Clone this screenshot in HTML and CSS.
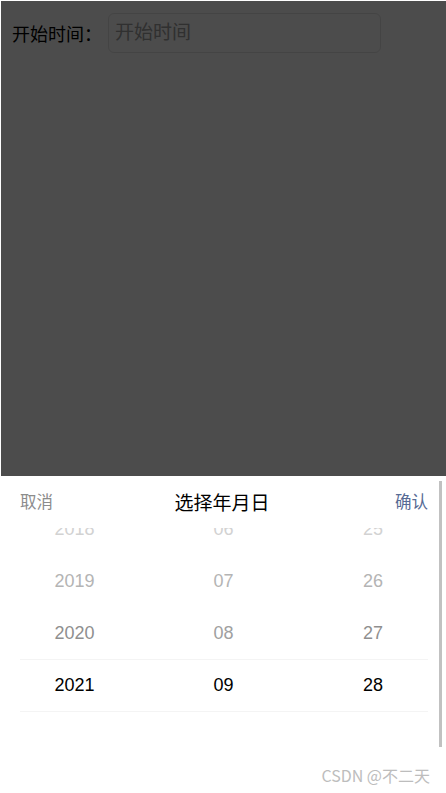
FILE: index.html
```html
<!DOCTYPE html>
<html lang="zh">
<head>
<meta charset="utf-8">
<title>选择年月日</title>
<link rel="stylesheet" href="styles.css">
</head>
<body>
<div class="form-row">
  <label class="form-label">开始时间：</label>
  <input class="form-input" type="text" placeholder="开始时间">
</div>

<div class="mask"></div>

<div class="popup">
  <div class="popup-header">
    <span class="btn-cancel">取消</span>
    <span class="popup-title">选择年月日</span>
    <span class="btn-confirm">确认</span>
  </div>
  <div class="picker">
    <div class="picker-cols">
      <div class="col">
        <div class="item far">2018</div>
        <div class="item mid">2019</div>
        <div class="item near">2020</div>
        <div class="item sel">2021</div>
      </div>
      <div class="col">
        <div class="item far">06</div>
        <div class="item mid">07</div>
        <div class="item near2">08</div>
        <div class="item sel">09</div>
      </div>
      <div class="col">
        <div class="item far">25</div>
        <div class="item mid">26</div>
        <div class="item near">27</div>
        <div class="item sel">28</div>
      </div>
    </div>
    <div class="indicator"></div>
  </div>
  <div class="scrollbar"></div>
  <div class="watermark">CSDN @不二天</div>
</div>
</body>
</html>
```

FILE: styles.css
```css
html, body {
  margin: 0;
  padding: 0;
  background: #ffffff;
}
body {
  width: 446px;
  height: 793px;
  overflow: hidden;
  position: relative;
  font-family: "Liberation Sans", "Noto Sans CJK SC", sans-serif;
}
.form-row {
  display: flex;
  align-items: center;
  padding: 13px 0 0 12px;
}
.form-label {
  font-size: 18px;
  color: #000;
  width: 96px;
  white-space: nowrap;
}
.form-input {
  box-sizing: border-box;
  width: 273px;
  height: 40px;
  border: 1px solid #e4e4e4;
  border-radius: 6px;
  padding: 0 6px;
  font-size: 19px;
  font-family: "Liberation Sans", "Noto Sans CJK SC", sans-serif;
  background: #fff;
  outline: none;
}
.form-input::placeholder {
  color: #a0a0a0;
}
.mask {
  position: fixed;
  top: 1px;
  left: 1px;
  right: 0;
  bottom: 0;
  background: rgba(0, 0, 0, 0.7);
}
.popup {
  position: fixed;
  left: 0;
  right: 0;
  bottom: 0;
  height: 317px;
  background: #fff;
}
.popup-header {
  height: 50px;
  display: flex;
  align-items: center;
  justify-content: space-between;
  padding: 0 18px 0 20px;
}
.btn-cancel {
  font-size: 16.5px;
  color: #8c8c8c;
}
.btn-confirm {
  font-size: 16.5px;
  color: #576b95;
}
.popup-title {
  font-size: 19px;
  color: #000;
  padding-right: 4px;
}
.picker {
  position: relative;
  height: 219px;
  margin: 2px 18px 0 20px;
  overflow: hidden;
}
.picker-cols {
  display: grid;
  grid-template-columns: 109px 189px 110px;
  margin-top: -25px;
}
.col {
  display: flex;
  flex-direction: column;
}
.item {
  height: 52px;
  line-height: 52px;
  text-align: center;
  font-size: 18px;
}
.far { color: #d2d2d2; }
.mid { color: #b4b4b4; }
.near { color: #8f8f8f; }
.near2 { color: #a0a0a0; }
.sel { color: #000; }
.indicator {
  position: absolute;
  left: 0;
  right: 0;
  top: 131px;
  height: 51px;
  border-top: 1px solid #f4f4f4;
  border-bottom: 1px solid #f4f4f4;
  pointer-events: none;
}
.scrollbar {
  position: absolute;
  top: 5px;
  right: 4px;
  width: 3px;
  height: 266px;
  background: #c1c1c1;
}
.watermark {
  position: absolute;
  right: 16px;
  bottom: 6px;
  font-size: 16px;
  color: #bdbdbd;
  font-family: "Noto Sans CJK SC", sans-serif;
}
```
